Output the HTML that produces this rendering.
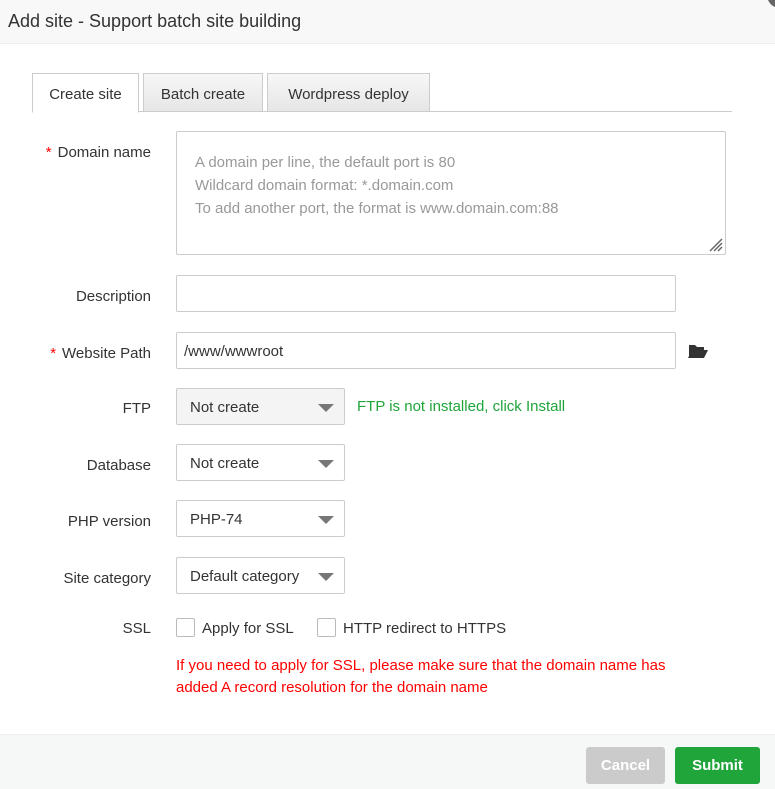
<!DOCTYPE html>
<html><head><style>
*{box-sizing:border-box;margin:0;padding:0}
body{width:775px;height:789px;background:#fff;font-family:"Liberation Sans","Noto Sans CJK SC",sans-serif;font-size:15px;color:#333;position:relative;overflow:hidden}
.hd{position:absolute;left:0;top:0;width:775px;height:44px;background:#f8f8f8;border-bottom:1px solid #eee;font-size:18px;line-height:42px;padding-left:8px;color:#333}
.close{position:absolute;right:-18px;top:-18px;width:26px;height:26px;border-radius:50%;background:#666}
.tabs{position:absolute;left:32px;top:111px;width:700px;border-top:1px solid #ccc}
.tab{position:absolute;top:73px;height:39px;border:1px solid #ccc;line-height:42px;text-align:center;background:linear-gradient(#f7f7f7,#e6e6e6);color:#333}
.tab.on{background:#fff;border-bottom:1px solid #fff;height:40px}
.lbl{position:absolute;right:624px;text-align:right;white-space:nowrap;color:#333}
.lbl i{color:#f00;font-style:normal;margin-right:6px}
.box{position:absolute;left:176px;border:1px solid #ccc;border-radius:2px;background:#fff}
.sel{position:absolute;left:176px;width:169px;height:37px;border:1px solid #ccc;border-radius:2px;background:#fff;line-height:38px;padding-left:13px}
.sel:after{content:"";position:absolute;right:10px;top:15px;border-left:8px solid transparent;border-right:8px solid transparent;border-top:8px solid #777}
.cb{position:absolute;top:618px;width:19px;height:19px;border:1px solid #bbb;border-radius:2px;background:#fff}
.btn{position:absolute;top:747px;height:37px;border-radius:3px;color:#fff;font-weight:bold;text-align:center;line-height:38px}
</style></head><body>
<div class="hd">Add site - Support batch site building</div>
<div class="close"></div>
<div class="tabs"></div>
<div class="tab on" style="left:32px;width:107px">Create site</div>
<div class="tab" style="left:143px;width:120px">Batch create</div>
<div class="tab" style="left:267px;width:163px">Wordpress deploy</div>

<div class="lbl" style="top:144px"><i>*</i>Domain name</div>
<div class="box" style="top:131px;width:550px;height:124px;padding:19px 0 0 18px;color:#999;line-height:23px">A domain per line, the default port is 80<br>Wildcard domain format: *.domain.com<br>To add another port, the format is www.domain.com:88
<svg style="position:absolute;right:2px;bottom:2px" width="16" height="16"><path d="M15 3L3 15M15 7L7 15M15 11L11 15" stroke="#666" stroke-width="1.5"/></svg></div>

<div class="lbl" style="top:288px">Description</div>
<div class="box" style="top:275px;width:500px;height:37px"></div>

<div class="lbl" style="top:345px"><i>*</i>Website Path</div>
<div class="box" style="top:332px;width:500px;height:37px;line-height:38px;padding-left:7px;color:#333">/www/wwwroot</div>
<svg style="position:absolute;left:688px;top:343px" width="20" height="16" viewBox="0 0 20 16"><path d="M1 2h6l2 2h7v3H5L1 14z" fill="#333"/><path d="M4 7h16l-4 8H0z" fill="#333"/></svg>

<div class="lbl" style="top:400px">FTP</div>
<div class="sel" style="top:388px;background:#f4f4f4">Not create</div>
<div style="position:absolute;left:357px;top:398px;color:#20a53a">FTP is not installed, click Install</div>

<div class="lbl" style="top:457px">Database</div>
<div class="sel" style="top:444px">Not create</div>
<div class="lbl" style="top:513px">PHP version</div>
<div class="sel" style="top:500px">PHP-74</div>
<div class="lbl" style="top:570px">Site category</div>
<div class="sel" style="top:557px">Default category</div>

<div class="lbl" style="top:620px">SSL</div>
<div class="cb" style="left:176px"></div>
<div style="position:absolute;left:202px;top:620px">Apply for SSL</div>
<div class="cb" style="left:317px"></div>
<div style="position:absolute;left:343px;top:620px">HTTP redirect to HTTPS</div>
<div style="position:absolute;left:176px;top:655px;width:535px;color:#f00;line-height:22px">If you need to apply for SSL, please make sure that the domain name has added A record resolution for the domain name</div>

<div style="position:absolute;left:0;top:734px;width:775px;height:55px;background:#f6f8f8;border-top:1px solid #eee"></div>
<div class="btn" style="left:586px;width:79px;background:#cbcbcb">Cancel</div>
<div class="btn" style="left:675px;width:85px;background:#20a53a">Submit</div>
</body></html>
